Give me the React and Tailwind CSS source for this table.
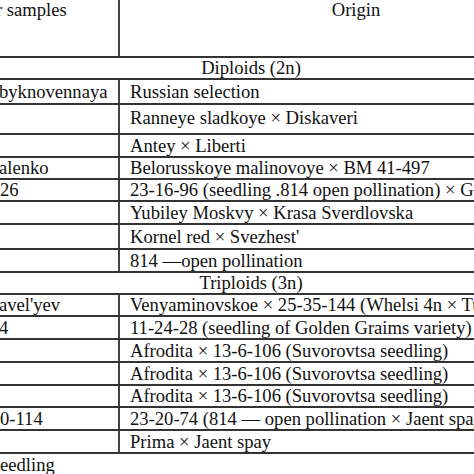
import React from 'react';

const rows = [
  { h: 25, left: 'byknovennaya', lx: -1, right: 'Russian selection' },
  { h: 30, left: '', right: 'Ranneye sladkoye × Diskaveri', top: true },
  { h: 23, left: '', right: 'Antey × Liberti' },
  { h: 22, left: 'alenko', lx: -1, right: 'Belorusskoye malinovoye × BM 41-497' },
  { h: 22, left: '26', lx: 0, right: '23-16-96 (seedling .814 open pollination) × Golden Graims' },
  { h: 23, left: '', right: 'Yubiley Moskvy × Krasa Sverdlovska' },
  { h: 25, left: '', right: "Kornel red × Svezhest'" },
  { h: 23, left: '', right: '814 —open pollination' },
];

const rows3 = [
  { h: 22, left: "avel'yev", lx: -1, right: 'Venyaminovskoe × 25-35-144 (Whelsi 4n × Tulameen)' },
  { h: 23, left: '4', lx: -1, right: '11-24-28 (seedling of Golden Graims variety)' },
  { h: 23, left: '', right: 'Afrodita × 13-6-106 (Suvorovtsa seedling)' },
  { h: 23, left: '', right: 'Afrodita × 13-6-106 (Suvorovtsa seedling)' },
  { h: 22, left: '', right: 'Afrodita × 13-6-106 (Suvorovtsa seedling)' },
  { h: 23, left: '0-114', lx: 0, right: '23-20-74 (814 — open pollination × Jaent spay)' },
  { h: 23, left: '', right: 'Prima × Jaent spay' },
];

const Row = ({ r }) => (
  <div className="flex border-b-2 border-[#333]" style={{ height: r.h }}>
    <div className="w-[210px] shrink-0 border-r-2 border-[#444] flex items-center pl-[90px] overflow-hidden">
      <span style={{ marginLeft: r.lx || 0 }}>{r.left}</span>
    </div>
    <div className={'flex-1 flex pl-[10px] ' + (r.top ? 'items-start pt-[2px]' : 'items-center')}>
      {r.right}
    </div>
  </div>
);

const Group = ({ h, label }) => (
  <div className="flex items-center justify-center border-b-2 border-[#333]" style={{ height: h }}>
    <span>{label}</span>
  </div>
);

export default function App() {
  return (
    <div
      className="w-[474px] h-[474px] overflow-hidden bg-white text-[#111] text-[18.6px] leading-[22px] whitespace-nowrap"
      style={{ fontFamily: '"Liberation Serif", "Times New Roman", serif' }}
    >
      <div className="w-[682px] -ml-[90px]">
        <div className="flex h-[58px] border-b-2 border-[#333]">
          <div className="w-[210px] shrink-0 border-r-2 border-[#444] pl-[86px] -mt-[1px]">
            r samples
          </div>
          <div className="flex-1 text-center -mt-[1px]">Origin</div>
        </div>
        <Group h={22} label="Diploids (2n)" />
        {rows.map((r, i) => (
          <Row key={'d' + i} r={r} />
        ))}
        <Group h={22} label="Triploids (3n)" />
        {rows3.map((r, i) => (
          <Row key={'t' + i} r={r} />
        ))}
        <div className="pl-[90px]">eedling</div>
      </div>
    </div>
  );
}
